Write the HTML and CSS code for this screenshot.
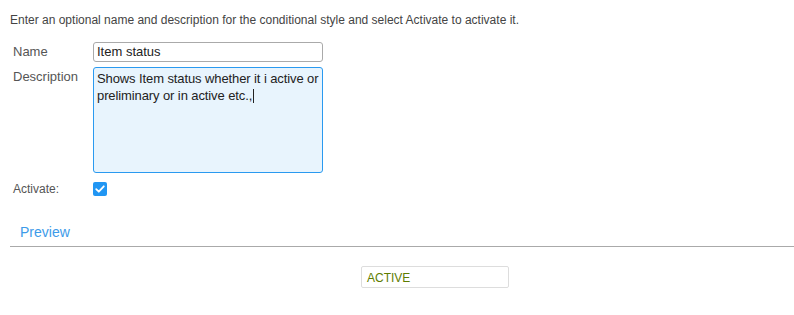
FILE: index.html
```html
<!DOCTYPE html>
<html>
<head>
  <title>Conditional Style</title>
  <link rel="stylesheet" href="styles.css">
</head>
<body>
  <p class="intro">Enter an optional name and description for the conditional style and select Activate to activate it.</p>

  <form class="style-form">
    <div class="form-row">
      <label for="name">Name</label>
      <div class="field name-field" id="name">Item status</div>
    </div>
    <div class="form-row">
      <label for="desc">Description</label>
      <div class="field desc-field" id="desc">Shows Item status whether it i active or preliminary or in active etc.,<span class="caret"></span></div>
    </div>
    <div class="form-row activate-row">
      <label class="small">Activate:</label>
      <span class="checkbox">
        <svg width="14" height="14" viewBox="0 0 14 14"><rect width="14" height="14" rx="2" fill="#2196f3"/><path d="M3.2 7.2 L5.8 9.7 L10.8 4.3" stroke="#fff" stroke-width="1.8" fill="none" stroke-linecap="round" stroke-linejoin="round"/></svg>
      </span>
    </div>
  </form>

  <div class="tabs">
    <span class="tab">Preview</span>
  </div>

  <div class="preview">
    <div class="preview-box">ACTIVE</div>
  </div>
</body>
</html>
```

FILE: styles.css
```css
body { margin: 0; font-family: Arial, "Liberation Sans", sans-serif; background: #fff; color: #444; }
.intro { margin: 0; padding: 13px 0 0 10px; font-size: 12px; line-height: 14px; color: #444; }
.style-form { padding: 15px 0 0 13px; }
.form-row { display: flex; margin-bottom: 5px; }
.form-row label { width: 80px; font-size: 13px; color: #555; padding-top: 2px; }
.form-row label.small { font-size: 12px; padding-top: 0; }
.field { box-sizing: border-box; width: 230px; font-size: 13px; color: #222; padding: 1px 3px; border-radius: 3px; line-height: 16px; }
.name-field { height: 20px; border: 1px solid #aaa; }
.desc-field { height: 106px; border: 1px solid #2a9af0; background: #e8f4fd; padding: 2px 0 1px 3px; line-height: 17px; letter-spacing: -0.1px; }
.caret { display: inline-block; width: 1px; height: 14px; background: #222; vertical-align: -3px; margin-left: 1px; }
.activate-row { margin-top: 9px; align-items: center; }
.checkbox { display: inline-flex; }
.tabs { margin: 27px 0 0 10px; border-bottom: 1px solid #aaa; padding: 0 0 5px 10px; }
.tab { font-size: 14px; color: #3d9be9; }
.preview { display: flex; justify-content: center; padding: 19px 0 0 76px; }
.preview-box { box-sizing: border-box; width: 148px; height: 22px; border: 1px solid #ddd; border-radius: 2px; font-size: 12px; color: #5e7d00; padding: 4px 5px; }
```
